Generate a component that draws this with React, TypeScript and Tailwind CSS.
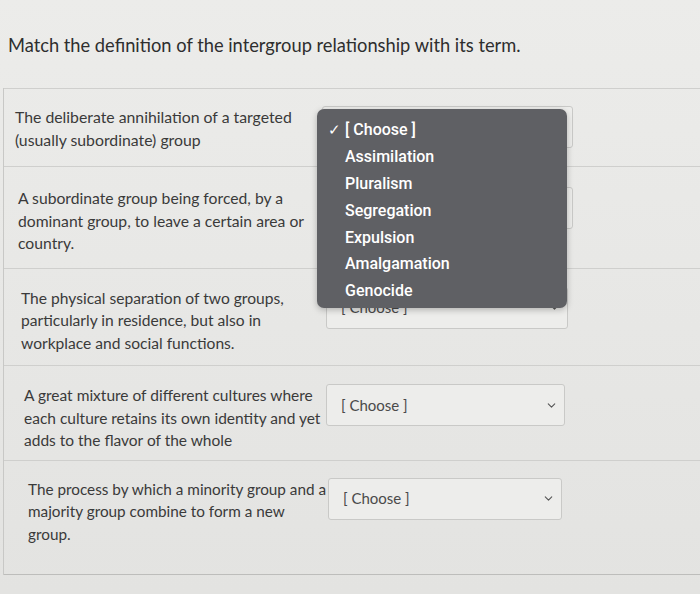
import { ChevronDown } from "lucide-react";

const rows = [
  {
    lines: ["The deliberate annihilation of a targeted", "(usually subordinate) group"],
    pad: "pl-[11px] pt-[17px] pb-[15px]",
    sel: "ml-[7px] w-[251px]",
    size: "text-[15.8px]",
  },
  {
    lines: ["A subordinate group being forced, by a", "dominant group, to leave a certain area or", "country."],
    pad: "pl-[14px] pt-[20px] pb-[13px]",
    sel: "ml-[6px] w-[249px]",
    size: "text-[15.7px]",
  },
  {
    lines: ["The physical separation of two groups,", "particularly in residence, but also in", "workplace and social functions."],
    pad: "pl-[17px] pt-[18px] pb-[11px]",
    sel: "ml-[5px] w-[242px]",
    size: "text-[15.6px]",
  },
  {
    lines: ["A great mixture of different cultures where", "each culture retains its own identity and yet", "adds to the flavor of the whole"],
    pad: "pl-[20px] pt-[18px] pb-[8px]",
    sel: "ml-[2px] w-[239px]",
    size: "text-[15.5px]",
  },
  {
    lines: ["The process by which a minority group and a", "majority group combine to form a new", "group."],
    pad: "pl-[24px] pt-[17px] pb-[29px]",
    sel: "ml-[0px] w-[234px]",
    size: "text-[15.3px]",
  },
];

const options = ["Assimilation", "Pluralism", "Segregation", "Expulsion", "Amalgamation", "Genocide"];

export default function App() {
  return (
    <div className="relative h-[594px] w-[700px] overflow-hidden bg-gradient-to-b from-[#ececea] to-[#e3e3e1] font-['Lato',sans-serif] text-[#3a3a3a]">
      <h1 className="pl-[8px] pt-[33px] pb-[31px] text-[18.3px] leading-[24px] text-[#2e2e2e]">
        Match the definition of the intergroup relationship with its term.
      </h1>
      <div className="ml-[3px] border-l border-[#c8c8c6]">
        {rows.map((r, i) => (
          <div key={i} className={`flex border-t border-[#cfcfcd] ${r.pad}`}>
            <div className={`w-[300px] shrink-0 ${r.size} leading-[22.5px]`}>
              {r.lines.map((l) => (
                <div key={l} className="whitespace-nowrap">{l}</div>
              ))}
            </div>
            <div className={`${r.sel} flex h-[42px] items-center justify-between rounded-[3px] border border-[#c9c9c7] bg-[#ededeb] pl-[14px] pr-[6px]`}>
              <span className="text-[15px] text-[#4a4a4a]">[ Choose ]</span>
              <ChevronDown size={13} strokeWidth={2} className="text-[#555]" />
            </div>
          </div>
        ))}
        <div className="border-t border-[#bdbdbb]" />
      </div>

      <div className="absolute left-[317px] top-[109px] h-[199px] w-[250px] rounded-[7px] bg-[#5f6064] pt-[8px] font-['Roboto',sans-serif] text-[16px] font-medium text-white shadow-[0_2px_6px_rgba(0,0,0,0.25)]">
        <div className="flex h-[26.8px] items-center">
          <span className="w-[28px] pl-[11px] text-[15px]">✓</span>
          <span>[ Choose ]</span>
        </div>
        {options.map((o) => (
          <div key={o} className="flex h-[26.8px] items-center pl-[28px]">
            {o}
          </div>
        ))}
      </div>
    </div>
  );
}
